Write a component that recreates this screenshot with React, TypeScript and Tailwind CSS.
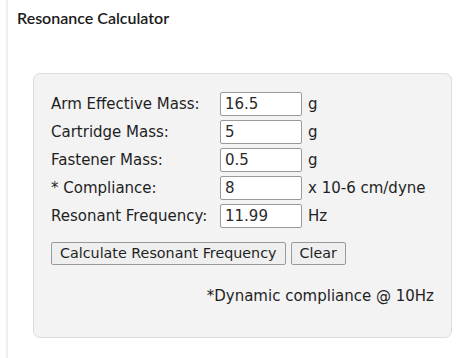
import { useState } from "react";

const rows = [
  { label: "Arm Effective Mass:", value: "16.5", unit: "g" },
  { label: "Cartridge Mass:", value: "5", unit: "g" },
  { label: "Fastener Mass:", value: "0.5", unit: "g" },
  { label: "* Compliance:", value: "8", unit: "x 10-6 cm/dyne" },
  { label: "Resonant Frequency:", value: "11.99", unit: "Hz" },
];

// Resonance calculator widget
const App = () => {
  const [values, setValues] = useState(rows.map((r) => r.value));

  return (
    <div className="w-[474px] h-[358px] bg-white flex overflow-hidden">
      {/* faint page edge */}
      <div className="ml-[6px] w-[2px] h-full bg-[#efefef]"></div>

      <div className="flex-1 flex flex-col">
        <h1 className="ml-[9px] mt-[8px] text-[16px] font-semibold text-[#1a1a1a] font-['Lato','Open_Sans',sans-serif] leading-[20px]">
          Resonance Calculator
        </h1>

        <div className="ml-[25px] mt-[45px] w-[419px] h-[265px] rounded-[7px] border border-[#dcdcdc] bg-[#f3f3f3] pl-[17px] pt-[18px] font-['DejaVu_Sans',sans-serif] text-[15px] text-[#1f1f1f]">
          <div className="flex flex-col gap-[4px]">
            {rows.map((r, i) => (
              <div key={r.label} className="flex items-center h-[24px]">
                <span className="w-[169px] shrink-0">{r.label}</span>
                <input
                  className="w-[82px] h-[24px] bg-white border border-[#9a9a9a] rounded-[2px] px-[4px] text-[15px] text-[#2a2a2a] outline-none"
                  value={values[i]}
                  onChange={(e) => {
                    const next = [...values];
                    next[i] = e.target.value;
                    setValues(next);
                  }}
                />
                <span className="ml-[6px]">{r.unit}</span>
              </div>
            ))}
          </div>

          <div className="flex gap-[5px] mt-[14px] text-[14.3px]">
            <button className="h-[23px] px-[8px] bg-[#efefef] border border-[#9a9a9a] rounded-[2px]">
              Calculate Resonant Frequency
            </button>
            <button className="h-[23px] px-[8px] bg-[#efefef] border border-[#9a9a9a] rounded-[2px]">
              Clear
            </button>
          </div>

          <p className="mt-[20px] pr-[17px] text-right">*Dynamic compliance @ 10Hz</p>
        </div>
      </div>
    </div>
  );
};

export default App;
